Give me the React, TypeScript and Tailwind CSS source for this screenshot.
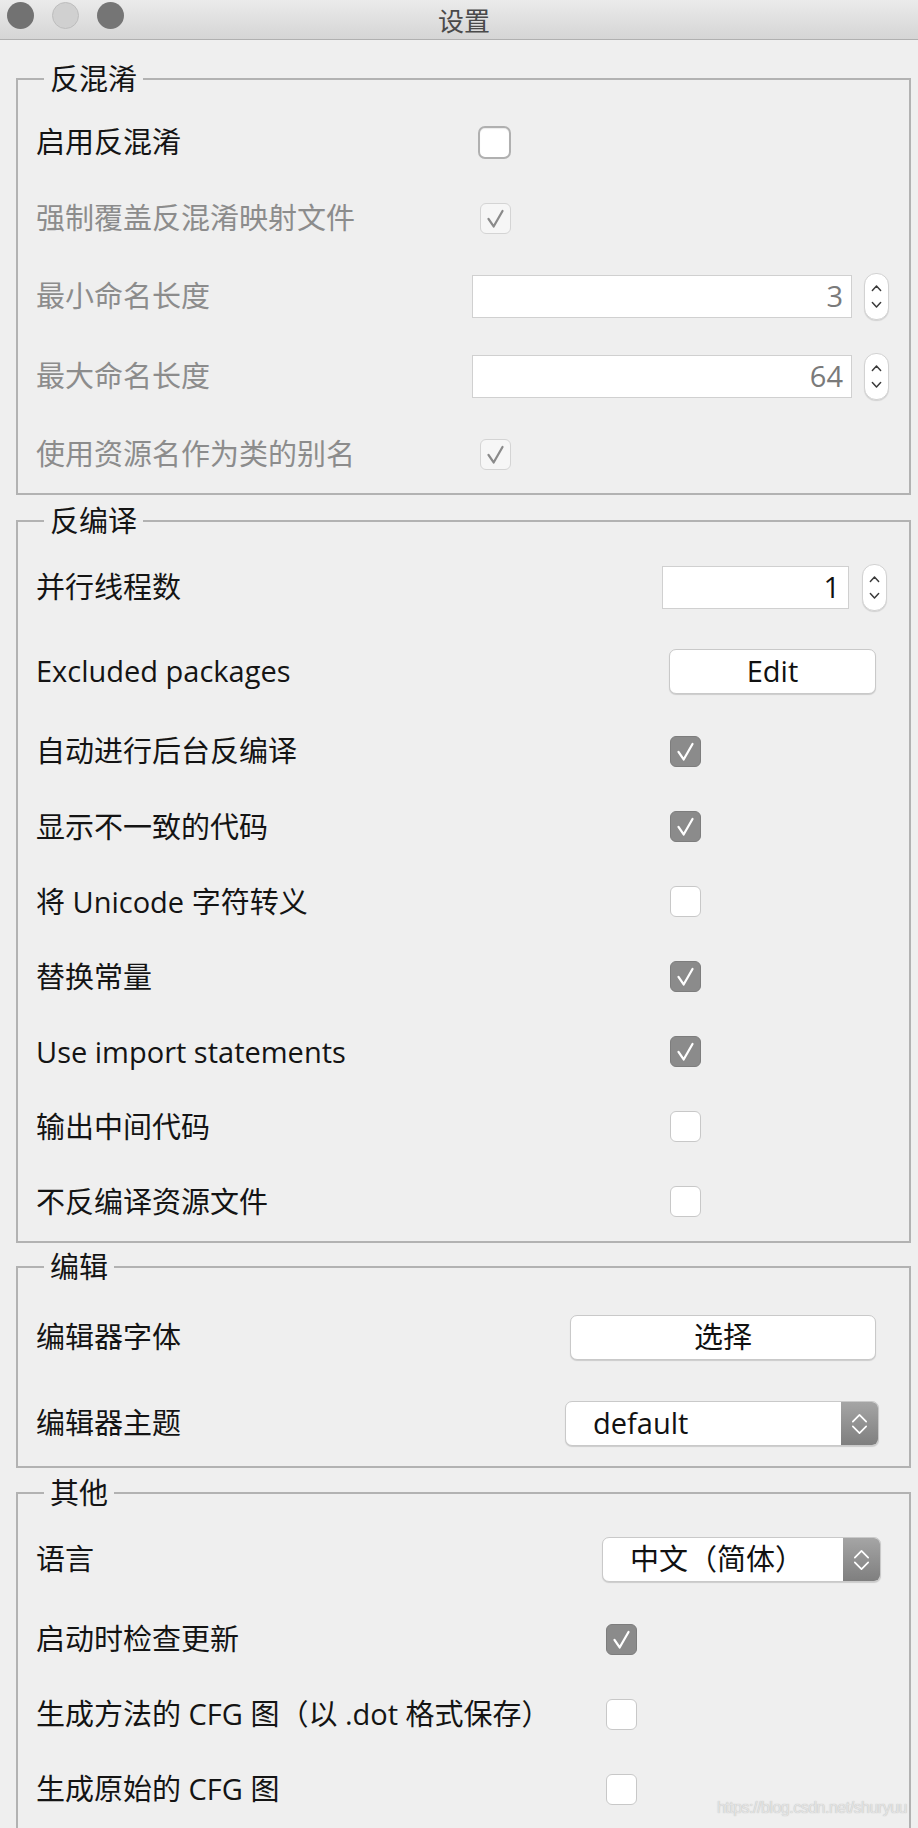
import React from 'react'

type Box = 'off' | 'offStrong' | 'on' | 'disabledOn'

const Check = ({ color }: { color: string }) => (
  <svg viewBox="0 0 31 31" className="h-full w-full">
    <path d="M8 16 L13.5 24 L23 7.5" fill="none" stroke={color} strokeWidth="2.4" strokeLinecap="round" strokeLinejoin="round" />
  </svg>
)

const CheckBox = ({ kind, className = '' }: { kind: Box; className?: string }) => {
  if (kind === 'on')
    return (
      <div className={`h-[31px] w-[31px] rounded-[6px] bg-[#8b8b8b] border border-[#7d7d7d] ${className}`}>
        <Check color="#ffffff" />
      </div>
    )
  if (kind === 'disabledOn')
    return (
      <div className={`h-[31px] w-[31px] rounded-[6px] bg-[#f6f6f6] border border-[#d4d4d4] ${className}`}>
        <Check color="#8a8a8a" />
      </div>
    )
  if (kind === 'offStrong')
    return <div className={`h-[33px] w-[33px] rounded-[7px] bg-white border-2 border-[#b0b0b0] shadow-[inset_0_1px_1px_rgba(0,0,0,0.08)] ${className}`} />
  return <div className={`h-[31px] w-[31px] rounded-[6px] bg-white border border-[#c8c8c8] ${className}`} />
}

const Spinner = ({ className = '' }: { className?: string }) => (
  <div className={`h-[47px] w-[25px] rounded-[12px] bg-white border border-[#d2d2d2] shadow-[0_1px_1px_rgba(0,0,0,0.12)] ${className}`}>
    <svg viewBox="0 0 25 47" className="h-full w-full">
      <path d="M8 17 L12.5 12 L17 17" fill="none" stroke="#3a3a3a" strokeWidth="1.6" strokeLinecap="round" strokeLinejoin="round" />
      <path d="M8 30 L12.5 35 L17 30" fill="none" stroke="#3a3a3a" strokeWidth="1.6" strokeLinecap="round" strokeLinejoin="round" />
    </svg>
  </div>
)

const NumberField = ({ value, w, dim }: { value: string; w: string; dim?: boolean }) => (
  <div className={`h-[43px] ${w} bg-white border border-[#d0d0d0] flex items-center justify-end pr-[8px] ${dim ? 'text-[#7a7a7a]' : 'text-[#111]'}`}>
    {value}
  </div>
)

const Button = ({ text, className }: { text: string; className: string }) => (
  <div className={`h-[45px] rounded-[7px] bg-white border border-[#c9c9c9] shadow-[0_1px_1px_rgba(0,0,0,0.15)] flex items-center justify-center text-[#111] ${className}`}>
    {text}
  </div>
)

const Select = ({ text, className, textPad }: { text: string; className: string; textPad: string }) => (
  <div className={`h-[45px] rounded-[7px] bg-white border border-[#c9c9c9] shadow-[0_1px_1px_rgba(0,0,0,0.15)] flex overflow-hidden ${className}`}>
    <div className={`flex-1 flex items-center text-[#111] ${textPad}`}>{text}</div>
    <div className="w-[37px] bg-gradient-to-b from-[#a5a5a5] to-[#7f7f7f]">
      <svg viewBox="0 0 37 45" className="h-full w-full">
        <path d="M11.5 20.5 L18.5 13.5 L25.5 20.5" fill="none" stroke="#ffffff" strokeWidth="1.8" strokeLinecap="round" strokeLinejoin="round" />
        <path d="M11.5 25.5 L18.5 32.5 L25.5 25.5" fill="none" stroke="#ffffff" strokeWidth="1.8" strokeLinecap="round" strokeLinejoin="round" />
      </svg>
    </div>
  </div>
)

const Row = ({ h, labelW, label, dim, children }: { h: string; labelW: string; label: string; dim?: boolean; children: React.ReactNode }) => (
  <div className={`flex items-center ${h}`}>
    <span className={`${labelW} shrink-0 whitespace-nowrap ${dim ? 'text-[#8c8c8c]' : 'text-[#141414]'}`}>{label}</span>
    {children}
  </div>
)

const Group = ({ title, className, children }: { title: string; className: string; children: React.ReactNode }) => (
  <fieldset className={`ml-[16px] mr-[7px] border-2 border-[#b2b2b2] pl-[18px] pr-0 ${className}`}>
    <legend className="ml-[8px] px-[6px] leading-[40px] text-[#141414]">{title}</legend>
    {children}
  </fieldset>
)

export default function App() {
  return (
    <div className="relative h-[1828px] w-[918px] overflow-hidden bg-[#efefef] text-[29px] font-['Open_Sans','Noto_Sans_CJK_SC',sans-serif]">
      {/* title bar */}
      <div className="flex h-[40px] items-start border-b border-[#b0b0b0] bg-gradient-to-b from-[#ebebeb] to-[#d5d5d5]">
        <div className="flex w-[130px] gap-[18px] pl-[7px] pt-[2px]">
          <div className="h-[27px] w-[27px] rounded-full bg-[#727272]" />
          <div className="h-[27px] w-[27px] rounded-full bg-[#d0d0d0] border border-[#bdbdbd]" />
          <div className="h-[27px] w-[27px] rounded-full bg-[#757575]" />
        </div>
        <div className="flex h-[39px] flex-1 items-center justify-center text-[26px] leading-[30px] text-[#4a4a4a] font-['Noto_Sans_CJK_SC',sans-serif]">设置</div>
        <div className="w-[120px]" />
      </div>

      <Group title="反混淆" className="mt-[19px] pt-[5px] pb-[1px]">
        <Row h="h-[76px]" labelW="w-[436px]" label="启用反混淆">
          <CheckBox kind="offStrong" className="ml-[6px]" />
        </Row>
        <Row h="h-[76px]" labelW="w-[436px]" label="强制覆盖反混淆映射文件" dim>
          <CheckBox kind="disabledOn" className="ml-[8px]" />
        </Row>
        <Row h="h-[80px]" labelW="w-[436px]" label="最小命名长度" dim>
          <NumberField value="3" w="w-[380px]" dim />
          <Spinner className="ml-[12px]" />
        </Row>
        <Row h="h-[80px]" labelW="w-[436px]" label="最大命名长度" dim>
          <NumberField value="64" w="w-[380px]" dim />
          <Spinner className="ml-[12px]" />
        </Row>
        <Row h="h-[76px]" labelW="w-[436px]" label="使用资源名作为类的别名" dim>
          <CheckBox kind="disabledOn" className="ml-[8px]" />
        </Row>
      </Group>

      <Group title="反编译" className="mt-[6px] pt-[4px] pb-[2px]">
        <Row h="h-[84px]" labelW="w-[626px]" label="并行线程数">
          <NumberField value="1" w="w-[187px]" />
          <Spinner className="ml-[13px]" />
        </Row>
        <Row h="h-[84px]" labelW="w-[626px]" label="Excluded packages">
          <Button text="Edit" className="ml-[7px] w-[207px]" />
        </Row>
        <Row h="h-[76px]" labelW="w-[626px]" label="自动进行后台反编译">
          <CheckBox kind="on" className="ml-[8px]" />
        </Row>
        <Row h="h-[75px]" labelW="w-[626px]" label="显示不一致的代码">
          <CheckBox kind="on" className="ml-[8px]" />
        </Row>
        <Row h="h-[75px]" labelW="w-[626px]" label="将 Unicode 字符转义">
          <CheckBox kind="off" className="ml-[8px]" />
        </Row>
        <Row h="h-[75px]" labelW="w-[626px]" label="替换常量">
          <CheckBox kind="on" className="ml-[8px]" />
        </Row>
        <Row h="h-[75px]" labelW="w-[626px]" label="Use import statements">
          <CheckBox kind="on" className="ml-[8px]" />
        </Row>
        <Row h="h-[75px]" labelW="w-[626px]" label="输出中间代码">
          <CheckBox kind="off" className="ml-[8px]" />
        </Row>
        <Row h="h-[75px]" labelW="w-[626px]" label="不反编译资源文件">
          <CheckBox kind="off" className="ml-[8px]" />
        </Row>
      </Group>

      <Group title="编辑" className="mt-[4px] pt-[6px] pb-[1px]">
        <Row h="h-[88px]" labelW="w-[529px]" label="编辑器字体">
          <Button text="选择" className="ml-[5px] w-[306px]" />
        </Row>
        <Row h="h-[84px]" labelW="w-[529px]" label="编辑器主题">
          <Select text="default" className="w-[314px]" textPad="pl-[27px]" />
        </Row>
      </Group>

      <Group title="其他" className="mt-[5px] pt-[4px] pb-[40px]">
        <Row h="h-[84px]" labelW="w-[566px]" label="语言">
          <Select text="中文（简体）" className="w-[279px]" textPad="pl-[27px]" />
        </Row>
        <Row h="h-[76px]" labelW="w-[566px]" label="启动时检查更新">
          <CheckBox kind="on" className="ml-[4px]" />
        </Row>
        <Row h="h-[74px]" labelW="w-[566px]" label="生成方法的 CFG 图（以 .dot 格式保存）">
          <CheckBox kind="off" className="ml-[4px]" />
        </Row>
        <Row h="h-[76px]" labelW="w-[566px]" label="生成原始的 CFG 图">
          <CheckBox kind="off" className="ml-[4px]" />
        </Row>
      </Group>

      {/* watermark */}
      <div className="absolute bottom-[8px] right-[11px] text-[16px] tracking-[-0.5px] text-[#e4e4e4] font-['Liberation_Sans',sans-serif] [text-shadow:0_0_1px_rgba(120,120,120,0.5)]">
        https://blog.csdn.net/shuryuu
      </div>
    </div>
  )
}
